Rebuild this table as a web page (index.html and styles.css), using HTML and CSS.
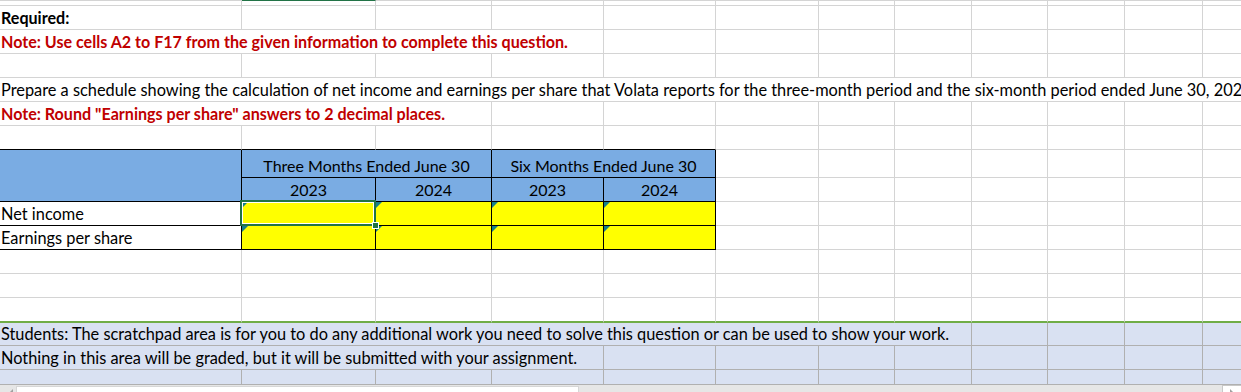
FILE: index.html
```html
<!DOCTYPE html>
<html lang="en">
<head>
<meta charset="utf-8">
<title>Schedule</title>
<link rel="stylesheet" href="styles.css">
</head>
<body>
<div class="sheet">
  <div class="row r0">
    <div class="c"></div><div class="c selcol"></div><div class="c"></div><div class="c"></div><div class="c"></div><div class="c"></div><div class="c"></div><div class="c"></div><div class="c"></div><div class="c"></div><div class="c"></div><div class="c"></div>
  </div>
  <div class="row">
    <div class="c b">Required:</div><div class="c"></div><div class="c"></div><div class="c"></div><div class="c"></div><div class="c"></div><div class="c"></div><div class="c"></div><div class="c"></div><div class="c"></div><div class="c"></div><div class="c"></div>
  </div>
  <div class="row">
    <div class="c s4 b red">Note: Use cells A2 to F17 from the given information to complete this question.</div><div class="c"></div><div class="c"></div><div class="c"></div><div class="c"></div><div class="c"></div><div class="c"></div><div class="c"></div><div class="c"></div>
  </div>
  <div class="row">
    <div class="c"></div><div class="c"></div><div class="c"></div><div class="c"></div><div class="c"></div><div class="c"></div><div class="c"></div><div class="c"></div><div class="c"></div><div class="c"></div><div class="c"></div><div class="c"></div>
  </div>
  <div class="row">
    <div class="c s12">Prepare a schedule showing the calculation of net income and earnings per share that Volata reports for the three-month period and the six-month period ended June 30, 2024.</div>
  </div>
  <div class="row">
    <div class="c s3 b red">Note: Round "Earnings per share" answers to 2 decimal places.</div><div class="c"></div><div class="c"></div><div class="c"></div><div class="c"></div><div class="c"></div><div class="c"></div><div class="c"></div><div class="c"></div><div class="c"></div>
  </div>
  <div class="row">
    <div class="c kb"></div><div class="c kb"></div><div class="c kb"></div><div class="c kb"></div><div class="c kb"></div><div class="c"></div><div class="c"></div><div class="c"></div><div class="c"></div><div class="c"></div><div class="c"></div><div class="c"></div>
  </div>
  <div class="row h28">
    <div class="c blue kr nb"></div>
    <div class="c s2 blue k ctr">Three Months Ended June 30</div>
    <div class="c s2 blue k ctr">Six Months Ended June 30</div>
    <div class="c"></div><div class="c"></div><div class="c"></div><div class="c"></div><div class="c"></div><div class="c"></div><div class="c"></div>
  </div>
  <div class="row">
    <div class="c blue k"></div>
    <div class="c blue k ctr">2023</div>
    <div class="c blue k ctr">2024</div>
    <div class="c blue k ctr">2023</div>
    <div class="c blue k ctr">2024</div>
    <div class="c"></div><div class="c"></div><div class="c"></div><div class="c"></div><div class="c"></div><div class="c"></div><div class="c"></div>
  </div>
  <div class="row">
    <div class="c k">Net income</div>
    <div class="c yel k tri ov"><div class="sel"><span class="handle"></span></div></div>
    <div class="c yel k tri"></div>
    <div class="c yel k tri"></div>
    <div class="c yel k tri"></div>
    <div class="c"></div><div class="c"></div><div class="c"></div><div class="c"></div><div class="c"></div><div class="c"></div><div class="c"></div>
  </div>
  <div class="row">
    <div class="c k">Earnings per share</div>
    <div class="c yel k tri"></div>
    <div class="c yel k tri"></div>
    <div class="c yel k tri"></div>
    <div class="c yel k tri"></div>
    <div class="c"></div><div class="c"></div><div class="c"></div><div class="c"></div><div class="c"></div><div class="c"></div><div class="c"></div>
  </div>
  <div class="row">
    <div class="c"></div><div class="c"></div><div class="c"></div><div class="c"></div><div class="c"></div><div class="c"></div><div class="c"></div><div class="c"></div><div class="c"></div><div class="c"></div><div class="c"></div><div class="c"></div>
  </div>
  <div class="row">
    <div class="c"></div><div class="c"></div><div class="c"></div><div class="c"></div><div class="c"></div><div class="c"></div><div class="c"></div><div class="c"></div><div class="c"></div><div class="c"></div><div class="c"></div><div class="c"></div>
  </div>
  <div class="row green">
    <div class="c"></div><div class="c"></div><div class="c"></div><div class="c"></div><div class="c"></div><div class="c"></div><div class="c"></div><div class="c"></div><div class="c"></div><div class="c"></div><div class="c"></div><div class="c"></div>
  </div>
  <div class="row scr h23">
    <div class="c s8">Students: The scratchpad area is for you to do any additional work you need to solve this question or can be used to show your work.</div><div class="c"></div><div class="c"></div><div class="c"></div><div class="c"></div>
  </div>
  <div class="row scr">
    <div class="c s4">Nothing in this area will be graded, but it will be submitted with your assignment.</div><div class="c"></div><div class="c"></div><div class="c"></div><div class="c"></div><div class="c"></div><div class="c"></div><div class="c"></div><div class="c"></div>
  </div>
  <div class="row scr h15">
    <div class="c"></div><div class="c"></div><div class="c"></div><div class="c"></div><div class="c"></div><div class="c"></div><div class="c"></div><div class="c"></div><div class="c"></div><div class="c"></div><div class="c"></div><div class="c"></div>
  </div>
  <div class="hscroll">
    <div class="sb-btn sb-left"><span class="arr-l"></span></div>
    <div class="sb-thumb"></div>
    <div class="sb-track"></div>
    <div class="sb-btn sb-right"><span class="arr-r"></span></div>
  </div>
</div>
</body>
</html>
```

FILE: styles.css
```css
* { box-sizing: border-box; }
html, body {
  margin: 0;
  padding: 0;
  background: #fff;
}
body {
  width: 1241px;
  height: 392px;
  overflow: hidden;
  font-family: Lato, "Liberation Sans", sans-serif;
  font-size: 16.35px;
  color: #000;
}
.sheet {
  width: 1241px;
  overflow: hidden;
}
.row {
  display: grid;
  grid-template-columns: 242px 134px 116px 112px 112px 103px 76px 77px 76px 77px 78px 100px;
  height: 24px;
  width: 1341px;
}
.r0 { height: 6px; }
.h28 { height: 28px; }
.h23 { height: 23px; }
.h15 { height: 15px; }
.c {
  min-width: 0;
  border-right: 1px solid #d4d4d4;
  border-bottom: 1px solid #d4d4d4;
  white-space: nowrap;
  overflow: hidden;
  display: flex;
  align-items: flex-end;
  line-height: 23px;
  padding-left: 1px;
}
.r0 .c { border-top: 1px solid #d4d4d4; }
.r0 .selcol { border-top-color: #217346; }
.s2 { grid-column: span 2; }
.s3 { grid-column: span 3; }
.s4 { grid-column: span 4; }
.s8 { grid-column: span 8; }
.s12 { grid-column: span 12; }
.b { font-weight: 700; font-size: 16.1px; }
.red { color: #c00000; }
.ctr { justify-content: center; padding-left: 0; font-size: 16px; }
.blue { background: #7aace3; }
.yel { background: #ffff00; }
.k { border-right-color: #000; border-bottom-color: #000; }
.kb { border-bottom-color: #000; }
.kr { border-right-color: #000; }
.nb { border-bottom: 0; }
.tri { position: relative; }
.tri::before {
  content: "";
  position: absolute;
  left: 0;
  top: 0;
  border-top: 6px solid #16808a;
  border-right: 6px solid transparent;
}
.ov { overflow: visible; }
.sel {
  position: absolute;
  left: -2px;
  top: -2px;
  width: 136px;
  height: 26px;
  border: 2px solid #217346;
  box-shadow: inset 0 0 0 1px #fff;
  z-index: 2;
}
.handle {
  position: absolute;
  right: -5px;
  bottom: -5px;
  width: 7px;
  height: 7px;
  background: #217346;
  border: 1px solid #fff;
}
.green .c { border-bottom: 2px solid #70ad47; height: 25px; }
.green { height: 25px; }
.scr .c {
  background: #d9e1f2;
  border-right-color: #b0b0b0;
  border-bottom-color: #b0b0b0;
}
.hscroll {
  display: flex;
  height: 17px;
  background: #e6e6e6;
  width: 1241px;
}
.sb-btn {
  position: relative;
  height: 17px;
}
.sb-left { width: 16px; }
.sb-thumb {
  width: 563px;
  height: 16px;
  margin-top: 1px;
  background: #fff;
  border: 1px solid #d6d6d6;
}
.sb-track { flex: 1; }
.sb-right {
  width: 19px;
  background: #fff;
  border-left: 1px solid #c8c8c8;
  border-top: 1px solid #c8c8c8;
}
.arr-l {
  position: absolute;
  left: 9px;
  top: 4px;
  width: 0;
  height: 0;
  border-top: 4px solid transparent;
  border-bottom: 4px solid transparent;
  border-right: 4px solid #a0a0a0;
}
.arr-r {
  position: absolute;
  left: 7px;
  top: 3px;
  width: 0;
  height: 0;
  border-top: 4px solid transparent;
  border-bottom: 4px solid transparent;
  border-left: 4px solid #a0a0a0;
}
```
